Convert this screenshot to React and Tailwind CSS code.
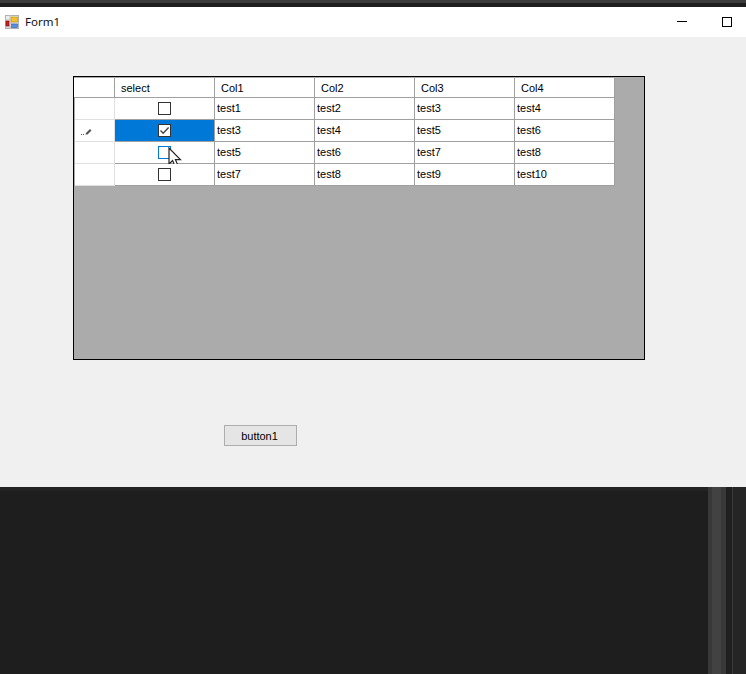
const cols = ["Col1", "Col2", "Col3", "Col4"];
const rows = [
  { id: 0, checked: false, cells: ["test1", "test2", "test3", "test4"] },
  { id: 1, checked: true, selected: true, editing: true, cells: ["test3", "test4", "test5", "test6"] },
  { id: 2, checked: false, focus: true, cells: ["test5", "test6", "test7", "test8"] },
  { id: 3, checked: false, cells: ["test7", "test8", "test9", "test10"] },
];

function WindowIcon() {
  return (
    <svg width="14" height="14" viewBox="0 0 14 14" className="shrink-0">
      <rect x="0" y="0" width="14" height="14" fill="#ececec" />
      <rect x="0.5" y="0.5" width="13" height="13" fill="none" stroke="#b0b0b0" />
      <path d="M5 0 V14 M0 5 H5 M0 12 H14 M5 8 H14" stroke="#c4c4c4" strokeWidth="1" fill="none" />
      <rect x="6" y="2" width="6.5" height="5" fill="#f6c12d" stroke="#b98a10" strokeWidth="0.6" />
      <rect x="1" y="6" width="3" height="5" fill="#c9201a" stroke="#7a1010" strokeWidth="0.6" />
      <rect x="6.5" y="9" width="6" height="3.5" fill="#5a8fe0" stroke="#2f5fb0" strokeWidth="0.6" />
    </svg>
  );
}

function Checkbox({ checked, focus }) {
  return (
    <span
      className={`relative block h-[13px] w-[13px] border ${focus ? "border-[#0078d7]" : "border-[#333333]"} bg-white`}
    >
      {checked && (
        <svg width="11" height="11" viewBox="0 0 11 11" className="absolute left-0 top-0">
          <path d="M1.5 5.5 L4.2 8.2 L9.6 2.4" fill="none" stroke="#444444" strokeWidth="1.4" />
        </svg>
      )}
    </span>
  );
}

function Pencil() {
  return (
    <svg width="12" height="8" viewBox="0 0 12 8">
      <rect x="0" y="6" width="1" height="1" fill="#555555" />
      <rect x="2" y="6" width="1" height="1" fill="#555555" />
      <path d="M4.5 6.5 L5 5 L9 1 L10.5 2.5 L6.5 6.5 Z" fill="#555555" />
    </svg>
  );
}

function Cursor() {
  return (
    <svg width="14" height="22" viewBox="0 0 14 22" className="absolute left-[53px] top-[5px]">
      <path
        d="M1 1 L1 17 L4.6 13.6 L7.2 19.8 L10 18.6 L7.4 12.6 L12.4 12.6 Z"
        fill="#ffffff"
        stroke="#222222"
        strokeWidth="1.2"
        strokeLinejoin="miter"
      />
    </svg>
  );
}

export default function App() {
  return (
    <div
      className="flex h-[674px] w-[746px] flex-col overflow-hidden bg-[#1e1e1e]"
      style={{ fontFamily: '"Liberation Sans", Arial, sans-serif' }}
    >
      <div className="h-[3px] bg-[#3c3c3c]" />
      <div className="h-[4px] bg-[#1e1e1e]" />

      <div className="flex h-[30px] items-center bg-white pl-[5px] pb-[1px]">
        <WindowIcon />
        <span className="ml-[6px] text-[11.5px] text-[#111111]" style={{ fontFamily: '"Noto Sans", sans-serif' }}>
          Form1
        </span>
        <div className="ml-auto mr-[14px] flex items-center">
          <span className="block h-[1px] w-[10px] bg-black" />
          <span className="ml-[35px] block h-[10px] w-[10px] border border-black" />
        </div>
      </div>

      <div className="h-[450px] bg-[#f0f0f0] pl-[73px] pt-[39px]">
        <div className="h-[284px] w-[572px] border border-black bg-[#ababab] pt-[1px]">
          <div className="flex h-[20px] w-[541px] border-b border-[#a0a0a0] bg-white text-[11px] text-black">
            <div className="ml-[1px] w-[40px] border-r border-[#a0a0a0]" />
            <div className="flex w-[100px] items-center border-r border-[#a0a0a0] pl-[6px] pt-[1px]">select</div>
            {cols.map((c) => (
              <div key={c} className="flex w-[100px] items-center border-r border-[#a0a0a0] pl-[6px] pt-[1px]">
                {c}
              </div>
            ))}
          </div>
          {rows.map((r) => (
            <div key={r.id} className="flex h-[22px] w-[541px] text-[11px] text-black">
              <div className="ml-[1px] flex w-[40px] items-center border-r border-b border-[#e0e0e0] bg-white pl-[6px] pt-[3px]">
                {r.editing && <Pencil />}
              </div>
              <div
                className={`relative flex w-[100px] items-center justify-center border-b border-r border-[#a0a0a0] ${r.selected ? "bg-[#0078d7]" : "bg-white"}`}
              >
                <Checkbox checked={r.checked} focus={r.focus} />
                {r.focus && <Cursor />}
              </div>
              {r.cells.map((c, i) => (
                <div
                  key={i}
                  className="flex w-[100px] items-center border-b border-r border-[#a0a0a0] bg-white pl-[2px]"
                >
                  {c}
                </div>
              ))}
            </div>
          ))}
        </div>
        <button className="ml-[151px] mt-[65px] block h-[21px] w-[73px] border border-[#adadad] bg-[#e5e5e5] pr-[2px] pt-[1px] text-center text-[11px] text-black">
          button1
        </button>
      </div>

      <div className="flex flex-1">
        <div className="flex-1 border-t-[4px] border-[#222222] bg-[#1e1e1e]" />
        <div className="flex w-[18px] bg-[#383838] px-[4px]">
          <div className="w-[9px] bg-[#424242]" />
        </div>
        <div className="w-[6px] bg-[#1f1f1f]" />
        <div className="w-[14px] border-l border-[#3a3a3a] bg-[#252525]" />
      </div>
    </div>
  );
}
